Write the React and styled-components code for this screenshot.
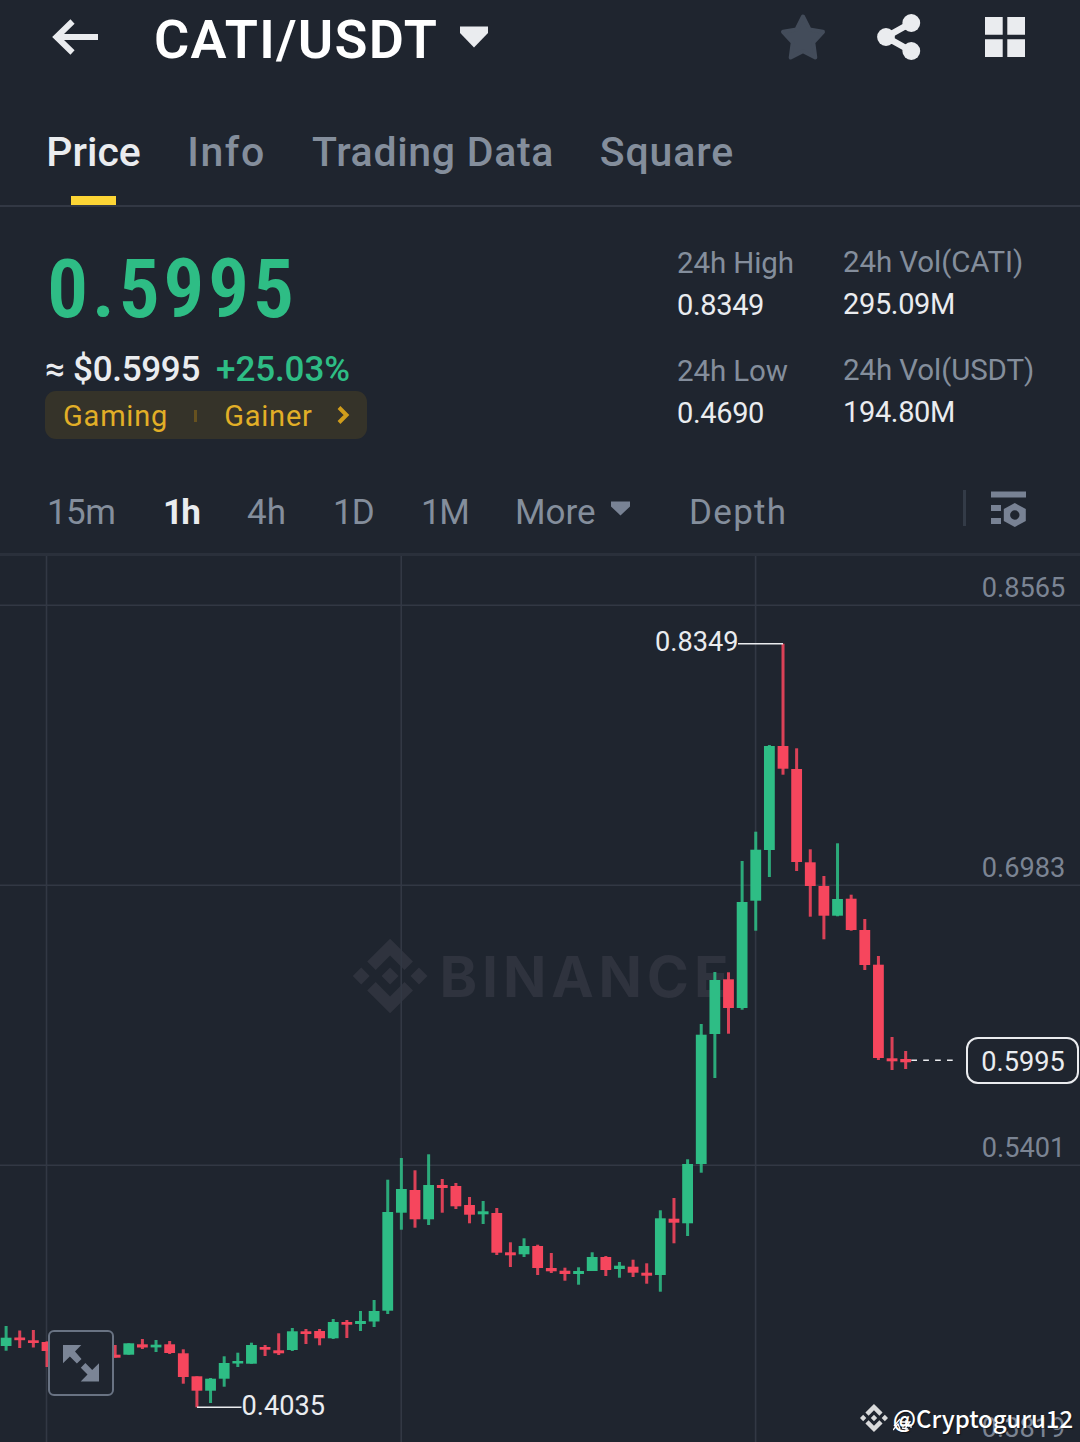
import React from "react";
import styled, {createGlobalStyle, css} from 'styled-components';

const Color = {
    bg: '#1f252f',
    white: '#eaecef',
    gray: '#848e9c',
    line: '#323844',
    green: '#2ebd85',
    red: '#f6465d',
    yellow: '#fcd535',
    tag: '#e2af27',
};

const GlobalStyle = createGlobalStyle`
    body {
        margin: 0;
        background: ${Color.bg};
        font-family: Roboto, "Liberation Sans", sans-serif;
    }
`;

const Page = styled.div`
    width: 1080px;
    height: 1442px;
    overflow: hidden;
    background: ${Color.bg};
    color: ${Color.white};
`;

const Header = styled.header`
    display: flex;
    align-items: center;
    height: 74px;
    padding: 0 55px 0 52px;
    box-sizing: border-box;
`;

const Pair = styled.h1`
    width: 285px;
    margin: 0 21px 0 55px;
    padding-top: 5px;
    color: #fff;
    font-size: 54px;
    font-weight: 600;
    line-height: 64px;
    letter-spacing: 1.3px;
    white-space: nowrap;
`;

const HeaderActions = styled.div`
    display: flex;
    align-items: center;
    margin-left: auto;
`;

const ShareSlot = styled.div`
    display: flex;
    margin: 0 64px 0 51px;
`;

const Tabs = styled.nav`
    display: flex;
    gap: 45px;
    height: 133px;
    padding-left: 47px;
    box-sizing: border-box;
    border-bottom: 2px solid ${Color.line};
`;

const Tab = styled.div`
    display: flex;
    flex-direction: column;
    align-items: center;
    justify-content: space-between;
    width: ${p => p.$width}px;
    padding-top: 53px;
    font-size: 41px;
    font-weight: 500;
    line-height: 50px;
    letter-spacing: ${p => p.$spacing || 0}px;
    white-space: nowrap;
    color: ${p => p.$active ? Color.white : Color.gray};
    ${p => p.$active && css`
        &::after {
            content: '';
            width: 45px;
            height: 9px;
            background: ${Color.yellow};
        }
    `}
`;

const Summary = styled.section`
    display: flex;
    justify-content: space-between;
    height: 263px;
    padding: 41px 0 0 45px;
    box-sizing: border-box;
`;

const LastPrice = styled.div`
    margin-bottom: 18px;
    padding-left: 2px;
    color: ${Color.green};
    font-size: 82px;
    font-weight: 600;
    font-stretch: 75%;
    line-height: 82px;
    letter-spacing: 3.5px;
`;

const SubPrice = styled.div`
    display: flex;
    gap: 16px;
    height: 43px;
    font-size: 35px;
    font-weight: 500;
    line-height: 44px;
    letter-spacing: -0.3px;
    white-space: nowrap;
`;

const Change = styled.span`
    color: ${Color.green};
    letter-spacing: -0.1px;
`;

const TagBar = styled.div`
    display: flex;
    align-items: center;
    width: 322px;
    height: 48px;
    padding: 1px 16px 0 18px;
    box-sizing: border-box;
    border-radius: 11px;
    background: #353329;
    color: ${Color.tag};
    font-size: 29px;
    letter-spacing: 0.8px;
`;

const TagDivider = styled.i`
    width: 3px;
    height: 12px;
    margin: 0 27px 0 26px;
    background: #66511f;
`;

const TagArrow = styled.svg`
    margin: -1px 0 0 auto;
`;

const Stats = styled.div`
    display: grid;
    grid-template-columns: 166px 237px;
    align-content: start;
    row-gap: 24px;
    margin-top: -6px;
`;

const Stat = styled.div`
    margin-top: ${p => p.$raised ? -1 : 0}px;
    font-size: 29.5px;
    line-height: 42px;
    letter-spacing: -0.1px;
    white-space: nowrap;
`;

const StatLabel = styled.div`
    color: ${Color.gray};
`;

const StatValue = styled.div`
    font-size: 29px;
    letter-spacing: -0.35px;
`;

const Intervals = styled.div`
    display: flex;
    align-items: center;
    height: 86px;
    padding: 2px 0 0 47px;
    box-sizing: border-box;
    border-bottom: 3px solid #2a303b;
    color: ${Color.gray};
    font-size: 35px;
    white-space: nowrap;
`;

const Interval = styled.div`
    display: flex;
    align-items: center;
    gap: 15px;
    width: ${p => p.$width}px;
    letter-spacing: ${p => p.$spacing}px;
    ${p => p.$active && css`
        color: ${Color.white};
        font-weight: 700;
    `}
    svg {
        margin-top: -9px;
    }
`;

const IntervalDivider = styled.i`
    width: 3px;
    height: 36px;
    margin: -9px 25px 0 auto;
    background: #333b47;
`;

const SettingsIcon = styled.svg`
    margin: -7px 54px 0 0;
`;

const ChartBody = styled.section`
    position: relative;
    height: 886px;
`;

const ChartSvg = styled.svg`
    display: block;
    font-size: 27.2px;
`;

const PriceTag = styled.div`
    position: absolute;
    top: 481px;
    right: 1px;
    width: 113px;
    height: 47px;
    padding-left: 1px;
    box-sizing: border-box;
    border: 2px solid ${Color.white};
    border-radius: 12px;
    background: ${Color.bg};
    font-size: 27.2px;
    line-height: 46px;
    text-align: center;
`;

const FullscreenButton = styled.button`
    position: absolute;
    top: 774px;
    left: 48px;
    width: 66px;
    height: 66px;
    padding: 0;
    border: 2px solid #697383;
    border-radius: 6px;
    background: ${Color.bg};
    svg {
        display: block;
    }
`;

const Author = styled.div`
    position: absolute;
    right: 7px;
    bottom: 6px;
    display: flex;
    align-items: center;
    gap: 5px;
    color: #fff;
    font-family: "Noto Sans CJK SC", "Noto Sans", sans-serif;
    font-size: 24px;
    font-weight: 500;
    line-height: 36px;
    letter-spacing: -0.1px;
    text-shadow: 1px 1px 1px rgba(0, 0, 0, 0.5);
`;

const AuthorBadge = styled.svg`
    position: absolute;
    left: 33px;
    top: 16px;
`;

const BINANCE_PATH = 'M16.624 13.92l2.718 2.716-7.353 7.353-7.353-7.353 2.717-2.716 4.636 4.66zM21.26 9.284L24 12l-2.715 2.716L18.568 12zM11.989 9.285l2.716 2.691-2.716 2.718L9.272 12zM2.716 9.284L5.409 12l-2.692 2.692L0 12zM11.989.012l7.353 7.328-2.718 2.716-4.635-4.636-4.636 4.66-2.717-2.716z';

// [wick top, body top, body bottom, wick bottom, rising], null is covered by the button
const candles = [
    [1326, 1337.7, 1346, 1350.7, 1],
    [1330.5, 1337.5, 1340.2, 1348, 0],
    [1330, 1340.3, 1343, 1347.5, 0],
    [1341.3, 1342, 1351, 1367, 0],
    null,
    null,
    null,
    null,
    [1345, 1354.7, 1357.7, 1357.7, 0],
    [1343.3, 1343.3, 1354.7, 1354.7, 1],
    [1339, 1344.3, 1347.5, 1349, 0],
    [1340, 1344.7, 1347.4, 1352, 1],
    [1341, 1344.3, 1353, 1354, 0],
    [1349.3, 1353.3, 1377, 1383.7, 0],
    [1376.3, 1376.3, 1390.7, 1407.3, 0],
    [1378, 1378.7, 1390.7, 1403, 1],
    [1356.3, 1363, 1378.7, 1386.7, 1],
    [1352.7, 1361, 1363.5, 1367, 1],
    [1342.7, 1345, 1363.7, 1363.7, 1],
    [1345, 1347, 1349.7, 1356, 0],
    [1333.3, 1350.3, 1353.3, 1355, 0],
    [1328, 1331.3, 1350, 1351, 1],
    [1329, 1331.3, 1334, 1344, 0],
    [1329, 1331, 1338.3, 1345.3, 0],
    [1319, 1322, 1338.3, 1339, 1],
    [1320, 1322, 1324.7, 1338, 0],
    [1311, 1321, 1324, 1331, 1],
    [1300, 1311, 1321.5, 1327, 1],
    [1179.7, 1212, 1310.7, 1314, 1],
    [1158, 1189, 1212.7, 1229.7, 1],
    [1170.3, 1190, 1219.3, 1227.7, 0],
    [1154.3, 1185, 1219.3, 1225, 1],
    [1179, 1185, 1188, 1212.7, 0],
    [1183, 1186, 1206.3, 1209, 0],
    [1197, 1205, 1214.7, 1223.3, 0],
    [1201, 1211.3, 1214.3, 1224, 1],
    [1208, 1213, 1252.7, 1255, 0],
    [1242.3, 1252.3, 1255.3, 1267, 0],
    [1238.3, 1246, 1254.3, 1257, 1],
    [1244.7, 1246, 1268, 1275, 0],
    [1253, 1268, 1271.3, 1273, 0],
    [1267.7, 1270.7, 1274, 1280.7, 0],
    [1267.3, 1271, 1274, 1284.7, 1],
    [1252.3, 1257, 1271, 1271, 1],
    [1256, 1257, 1270, 1276, 0],
    [1262, 1265.7, 1269, 1277.7, 1],
    [1259.7, 1266.7, 1272.7, 1277, 0],
    [1263.3, 1272.7, 1275.7, 1283.7, 0],
    [1210.3, 1218.3, 1275, 1291.7, 1],
    [1198, 1218.7, 1222.7, 1243.3, 0],
    [1159.3, 1164, 1223.3, 1236, 1],
    [1024, 1034.7, 1164, 1172.7, 1],
    [972, 980, 1034, 1078, 1],
    [972.3, 979.3, 1008, 1033.7, 0],
    [861, 902, 1008, 1009.7, 1],
    [831.7, 849.7, 900.7, 930.7, 1],
    [745, 746, 850, 877, 1],
    [643.7, 746, 768.7, 774.7, 0],
    [748.3, 769, 862, 871, 0],
    [849.3, 862.3, 886, 916.7, 0],
    [876, 886, 915.7, 939.3, 0],
    [843.3, 899, 915.7, 916.3, 1],
    [894.7, 898.7, 930, 930.7, 0],
    [919, 930, 965, 970, 0],
    [956, 964.7, 1058, 1060, 0],
    [1037, 1058.3, 1061.3, 1070, 0],
    [1051, 1059, 1062.3, 1069, 0],
];

const STEP = 13.63;
const FIRST_X = 6.1;

const axisLabels = [
    {text: '0.8565', y: 596.7},
    {text: '0.6983', y: 876.7},
    {text: '0.5401', y: 1156.7},
    {text: '0.3819', y: 1436.7},
];

const tabs = [
    {name: 'Price', width: 93, active: true},
    {name: 'Info', width: 83, spacing: 1.6},
    {name: 'Trading Data', width: 240, spacing: 0.7},
    {name: 'Square', width: 138, spacing: 0.9},
];

const stats = [
    {label: '24h High', value: '0.8349'},
    {label: '24h Vol(CATI)', value: '295.09M', raised: true},
    {label: '24h Low', value: '0.4690'},
    {label: '24h Vol(USDT)', value: '194.80M', raised: true},
];

const intervals = [
    {name: '15m', width: 116, spacing: -0.6},
    {name: '1h', width: 84, spacing: -1.8, active: true},
    {name: '4h', width: 86, spacing: 0},
    {name: '1D', width: 88, spacing: -0.8},
    {name: '1M', width: 94, spacing: -1.5},
    {name: 'More', width: 174, spacing: 0, arrow: true},
    {name: 'Depth', width: 100, spacing: 1.3},
];

const Candle = ({index, data}) => {
    const [high, top, bottom, low, rising] = data;
    const x = FIRST_X + STEP * index;
    const fill = rising ? Color.green : Color.red;
    return (
        <g fill={fill}>
            <rect x={x - 1.5} y={high} width={3} height={low - high} opacity={0.88}/>
            <rect x={x - 5.4} y={top} width={10.8} height={bottom - top}/>
        </g>
    );
};

const Chart = () => (
    <ChartBody>
        <ChartSvg width="1080" height="886" viewBox="0 556 1080 886">
            <g fill="#2f333e">
                <path transform="translate(352.8 938.7) scale(3.11)" d={BINANCE_PATH}/>
                <text x="439.5" y="996.7" fontFamily="Inter, sans-serif" fontSize="57" fontWeight="700"
                      textLength="289">BINANCE</text>
            </g>
            <g stroke={Color.line} strokeWidth="1.6">
                {[46.5, 401.2, 755.6].map(x => <line key={x} x1={x} x2={x} y1="556" y2="1442"/>)}
                {[605.3, 885.3, 1165.3].map(y => <line key={y} x1="0" x2="1080" y1={y} y2={y}/>)}
            </g>
            {candles.map((item, index) => !item ? null : <Candle key={index} index={index} data={item}/>)}
            <g stroke={Color.white} strokeWidth="1.6">
                <line x1="738" x2="783" y1="643.7" y2="643.7"/>
                <line x1="197" x2="241.5" y1="1407.3" y2="1407.3"/>
                <line x1="911.3" x2="954" y1="1060.3" y2="1060.3" strokeDasharray="5.7 6.2"/>
            </g>
            <g fill={Color.white}>
                <text x="655" y="651">0.8349</text>
                <text x="241.5" y="1414.7">0.4035</text>
            </g>
            <g fill="#7b8493">
                {axisLabels.map(item => <text key={item.text} x="981.8" y={item.y}>{item.text}</text>)}
            </g>
        </ChartSvg>
        <PriceTag>0.5995</PriceTag>
        <FullscreenButton>
            <svg width="62" height="62" viewBox="50 1333 62 62" fill="#7b8596">
                <path d="M63 1346h18.300l-6.300 6.600 6.500 7.400-4.600 4.600-7-7-6.900 6.700z"/>
                <path d="M99 1382.500H80.700l6.800-7-6.700-6.800 4.600-4.600 6.800 7 6.800-6.900z"/>
            </svg>
        </FullscreenButton>
        <Author>
            <svg width="28" height="28" viewBox="0 0 24 24" fill="#d9dadb"><path d={BINANCE_PATH}/></svg>
            @Cryptoguru12
            <AuthorBadge width="20" height="16" viewBox="0 0 20 16" fill="none" stroke="#fff" strokeWidth="1.3">
                <path d="M1 10l6-7M0 14l5-6 2 5M7 6h10l-4 5M9 9h9v3M13 4v11M9 12l6 1"/>
            </AuthorBadge>
        </Author>
    </ChartBody>
);

const App = () => (
    <Page>
        <GlobalStyle/>
        <Header>
            <svg width="47" height="38" viewBox="52 18 47 38" fill="none" stroke={Color.white} strokeWidth="6">
                <path d="M98 37H57M72.500 21.500L56.500 37l16 15.500"/>
            </svg>
            <Pair>CATI/USDT</Pair>
            <svg width="28" height="22" viewBox="0 0 28 22" fill={Color.white}>
                <path d="M0 0.500h28v6.500L14 21.500 0 7z"/>
            </svg>
            <HeaderActions>
                <svg width="46" height="48" viewBox="780 14 46 48" fill="#434c5a" stroke="#434c5a"
                     strokeWidth="4" strokeLinejoin="round">
                    <path d="M803 17.500l6.500 13 13.500 2.300-9.700 10.700 2 15-12.300-6.300-12.300 6.300 2-15-9.700-10.700 13.500-2.300z"/>
                </svg>
                <ShareSlot>
                    <svg width="44" height="46" viewBox="877 14 44 46" fill={Color.white}>
                        <path d="M911 23L886 37l25 14" fill="none" stroke={Color.white} strokeWidth="6.5"/>
                        <circle cx="911.300" cy="23" r="8.900"/>
                        <circle cx="886" cy="37" r="8.900"/>
                        <circle cx="911.300" cy="51" r="8.900"/>
                    </svg>
                </ShareSlot>
                <svg width="40" height="40" viewBox="0 0 40 40" fill={Color.white}>
                    <path d="M0 0h17.700v17.700H0zM22.300 0H40v17.700H22.300zM0 22.300h17.700V40H0zM22.300 22.300H40V40H22.300z"/>
                </svg>
            </HeaderActions>
        </Header>
        <Tabs>
            {tabs.map(tab => (
                <Tab key={tab.name} $width={tab.width} $spacing={tab.spacing} $active={tab.active}>{tab.name}</Tab>
            ))}
        </Tabs>
        <Summary>
            <div>
                <LastPrice>0.5995</LastPrice>
                <SubPrice>
                    <span>≈ $0.5995</span>
                    <Change>+25.03%</Change>
                </SubPrice>
                <TagBar>
                    <span>Gaming</span>
                    <TagDivider/>
                    <span>Gainer</span>
                    <TagArrow width="14" height="20" viewBox="0 0 14 20" fill="none" stroke="#d09d1b" strokeWidth="4">
                        <path d="M2 2.500L9.500 10 2 17.500"/>
                    </TagArrow>
                </TagBar>
            </div>
            <Stats>
                {stats.map(item => (
                    <Stat key={item.label} $raised={item.raised}>
                        <StatLabel>{item.label}</StatLabel>
                        <StatValue>{item.value}</StatValue>
                    </Stat>
                ))}
            </Stats>
        </Summary>
        <Intervals>
            {intervals.map(item => (
                <Interval key={item.name} $width={item.width} $spacing={item.spacing} $active={item.active}>
                    {item.name}
                    {item.arrow && (
                        <svg width="19" height="15" viewBox="0 0 19 15" fill="#788294">
                            <path d="M0 0.500h19v5L9.500 14.500 0 5.500z"/>
                        </svg>
                    )}
                </Interval>
            ))}
            <IntervalDivider/>
            <SettingsIcon width="35" height="37" viewBox="991 491 35 37" fill="#788294">
                <path d="M991 491.500h35v6h-35zM991 505h10v6h-10zM991 518h10v6h-10z"/>
                <path fillRule="evenodd"
                      d="M1014.800 503l11 6v12l-11 6-11-6v-12zM1014.800 510.300a4.700 4.700 0 1 0 0 9.400a4.700 4.700 0 1 0 0-9.400z"/>
            </SettingsIcon>
        </Intervals>
        <Chart/>
    </Page>
);

export default App;
